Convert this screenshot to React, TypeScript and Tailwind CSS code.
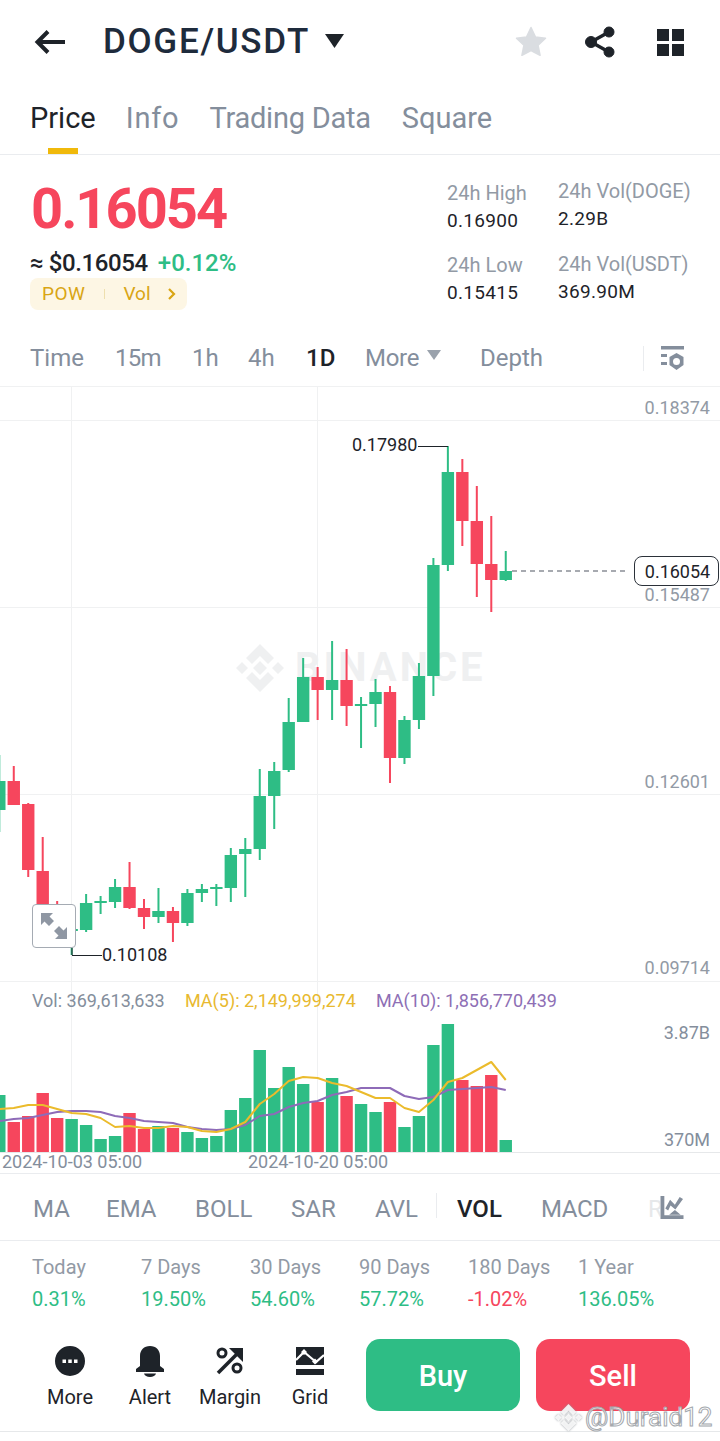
import React from 'react';

// [wick top, body top, body bottom, wick bottom, up?]
const STEP = 14.47;
const candles: [number, number, number, number, number][] = [
  [755, 781, 810, 832, 1],
  [766, 781, 805, 805, 0],
  [803, 804, 870, 877, 0],
  [837, 871, 905, 905, 0],
  [901, 905, 931, 931, 0],
  [905, 929, 931, 955, 1],
  [894, 903, 930, 932, 1],
  [896, 901, 903, 914, 1],
  [879, 887, 902, 908, 1],
  [862, 887, 908, 909, 0],
  [899, 908, 917, 929, 0],
  [888, 911, 917, 923, 1],
  [907, 911, 923, 942, 0],
  [889, 893, 923, 926, 1],
  [884, 889, 893, 902, 1],
  [884, 887, 889, 906, 1],
  [848, 855, 888, 902, 1],
  [838, 849, 854, 897, 1],
  [769, 796, 849, 860, 1],
  [762, 771, 796, 829, 1],
  [698, 722, 770, 772, 1],
  [658, 677, 722, 722, 1],
  [667, 677, 690, 720, 0],
  [641, 680, 690, 720, 1],
  [649, 680, 706, 726, 0],
  [697, 704, 705, 748, 1],
  [679, 692, 704, 727, 1],
  [686, 692, 758, 783, 0],
  [716, 720, 758, 764, 1],
  [663, 676, 720, 729, 1],
  [558, 565, 676, 696, 1],
  [446, 472, 565, 571, 1],
  [459, 472, 521, 546, 0],
  [486, 521, 564, 597, 0],
  [516, 564, 580, 612, 0],
  [551, 571, 580, 581, 1],
];

const volumes: [number, number][] = [
  [1095, 1], [1122, 0], [1116, 0], [1093, 0], [1118, 0], [1119, 1], [1125, 1], [1139, 1], [1136, 1],
  [1113, 0], [1129, 0], [1126, 1], [1128, 0], [1132, 1], [1138, 1], [1136, 1], [1110, 1], [1098, 1],
  [1050, 1], [1088, 1], [1067, 1], [1084, 1], [1102, 0], [1078, 1], [1096, 0], [1104, 1], [1112, 1],
  [1102, 0], [1127, 1], [1116, 1], [1045, 1], [1024, 1], [1080, 0], [1086, 0], [1075, 0], [1140, 1],
];

const ma5 = [1109, 1108, 1105, 1105, 1109, 1113, 1114, 1118, 1127, 1126, 1128, 1128, 1126, 1127, 1131, 1132, 1129, 1122, 1104, 1094, 1081, 1077, 1078, 1083, 1086, 1092, 1098, 1098, 1108, 1112, 1100, 1082, 1078, 1070, 1062, 1080];
const ma10 = [1121, 1119, 1118, 1115, 1112, 1111, 1111, 1112, 1116, 1118, 1121, 1122, 1123, 1127, 1129, 1130, 1129, 1125, 1116, 1114, 1107, 1103, 1101, 1095, 1092, 1088, 1088, 1088, 1096, 1099, 1097, 1090, 1089, 1088, 1087, 1090];

const cx = (i: number) => -0.7 + i * STEP;
const GREEN = '#2ebd85';
const RED = '#f6465d';

function ChartSvg() {
  return (
    <svg className="absolute inset-0" width={720} height={786} viewBox="0 387 720 786">
      <g stroke="#f0f1f2" strokeWidth={1}>
        <path d="M0 420.5H720M0 607.5H720M0 794.5H720M0 981.5H720M71.5 387V1152M317.5 387V1152" fill="none" />
      </g>
      <path d="M0 1152.5H720" stroke="#e6e8ea" strokeWidth={1} />
      {volumes.map(([top, up], i) => (
        <rect key={i} x={cx(i) - 6.2} y={top} width={12.4} height={1152 - top} fill={up ? GREEN : RED} />
      ))}
      <polyline points={ma10.map((y, i) => `${cx(i)},${y}`).join(' ')} fill="none" stroke="#8e6bb8" strokeWidth={2} strokeLinejoin="round" />
      <polyline points={ma5.map((y, i) => `${cx(i)},${y}`).join(' ')} fill="none" stroke="#ebbb2c" strokeWidth={2} strokeLinejoin="round" />
      {candles.map(([wt, bt, bb, wb, up], i) => {
        const c = up ? GREEN : RED;
        return (
          <g key={i} fill={c}>
            <rect x={cx(i) - 1} y={wt} width={2} height={wb - wt} />
            <rect x={cx(i) - 6.2} y={bt} width={12.4} height={Math.max(bb - bt, 2)} />
          </g>
        );
      })}
      <path d="M418 446.5H448M72 955.5H102M72 948V955" fill="none" stroke="#1e2329" strokeWidth={1} />
      <path d="M512 571H628" fill="none" stroke="#8a8f96" strokeWidth={1.500} strokeDasharray="5 4" />
    </svg>
  );
}

function BinanceMark({ className }: { className?: string }) {
  return (
    <svg className={className} viewBox="0 0 48 48" fill="currentColor">
      <path d="M24 0L38 14 32 20 24 12 16 20 10 14zM24 48L10 34 16 28 24 36 32 28 38 34zM0 24L6 18 12 24 6 30zM36 24L42 18 48 24 42 30zM24 17L31 24 24 31 17 24z" />
    </svg>
  );
}

function TopBar() {
  return (
    <div className="flex h-[84px] items-center">
      <svg className="ml-[34px] w-[32px] h-[26px] text-[#1e2329]" viewBox="0 0 32 26" fill="none" stroke="currentColor" strokeWidth={4}>
        <path d="M31 13H4M14 2.500L3.500 13 14 23.500" />
      </svg>
      <div className="ml-[37px] text-[35px] font-medium text-[#1e2b3c] tracking-[1.700px]">DOGE/USDT</div>
      <svg className="ml-[15px] mt-[-3px] w-[19px] h-[14px] text-[#1e2329]" viewBox="0 0 19 14" fill="currentColor">
        <path d="M0 0H19L9.500 14z" />
      </svg>
      <svg className="ml-auto w-[32px] h-[32px] text-[#dadde1]" viewBox="0 0 32 32" fill="currentColor" stroke="currentColor" strokeWidth={1.500} strokeLinejoin="round">
        <path d="M16 1.500l4.500 9.500 10 1.300-7.400 7 2 10L16 24.500 6.900 29.300l2-10-7.400-7 10-1.300z" />
      </svg>
      <svg className="ml-[38px] w-[30px] h-[32px] text-[#1e2329]" viewBox="0 0 30 32" fill="currentColor" stroke="currentColor">
        <circle cx="24" cy="6" r="5" />
        <circle cx="24" cy="26" r="5" />
        <circle cx="6" cy="16" r="5.500" />
        <path d="M6 16L24 6M6 16l18 10" fill="none" strokeWidth={3.500} />
      </svg>
      <svg className="ml-[42px] mr-[36px] w-[27px] h-[27px] text-[#1e2329]" viewBox="0 0 27 27" fill="currentColor">
        <path d="M0 0H12V12H0zM15 0H27V12H15zM0 15H12V27H0zM15 15H27V27H15z" />
      </svg>
    </div>
  );
}

function Tabs() {
  return (
    <div className="relative flex h-[71px] items-center border-b border-[#eaecef] text-[29px] text-[#848e9c]">
      <div className="ml-[30px] text-[#1e2329]">Price</div>
      <div className="ml-[30px] tracking-[0.800px]">Info</div>
      <div className="ml-[30px] tracking-[-0.250px]">Trading Data</div>
      <div className="ml-[31px]">Square</div>
      <div className="absolute left-[48px] bottom-0 w-[30px] h-[6px] bg-[#f0b90b]" />
    </div>
  );
}

function Stat({ label, value, top }: { label: string; value: string; top: string }) {
  return (
    <div className={top}>
      <div className="text-[20px] leading-[24px] text-[#929aa5]">{label}</div>
      <div className="mt-[4px] text-[19px] leading-[24px] tracking-[0.300px] text-[#1e2329]">{value}</div>
    </div>
  );
}

function PriceBlock() {
  return (
    <div className="flex h-[177px]">
      <div className="ml-[30px] w-[417px]">
        <div className="mt-[21px] h-[66px] leading-[66px] text-[56px] font-bold tracking-[-2px] text-[#f6465d] ml-[1px]">0.16054</div>
        <div className="mt-[7px] flex h-[28px] items-center text-[24px] leading-[28px]">
          <span className="font-medium text-[#1e2329] tracking-[-0.400px]">≈ $0.16054</span>
          <span className="ml-[10px] font-medium text-[#2ebd85]">+0.12%</span>
        </div>
        <div className="mt-[1px] flex w-[157px] h-[32px] items-center rounded-[8px] bg-[#fdf6e4] text-[19px] text-[#d9a514]">
          <span className="ml-[12px] tracking-[0.500px]">POW</span>
          <span className="ml-[19px] w-[1px] h-[10px] bg-[#eedfae]" />
          <span className="ml-[18px]">Vol</span>
          <svg className="ml-[16px] w-[9px] h-[12px]" viewBox="0 0 9 12" fill="none" stroke="currentColor" strokeWidth={2.200}>
            <path d="M2 1l5 5-5 5" />
          </svg>
        </div>
      </div>
      <div className="w-[111px]">
        <Stat label="24h High" value="0.16900" top="mt-[26px]" />
        <Stat label="24h Low" value="0.15415" top="mt-[20px]" />
      </div>
      <div>
        <Stat label="24h Vol(DOGE)" value="2.29B" top="mt-[24px]" />
        <Stat label="24h Vol(USDT)" value="369.90M" top="mt-[21px]" />
      </div>
    </div>
  );
}

function TimeRow() {
  return (
    <div className="flex h-[55px] items-center pb-[2px] text-[24px] text-[#848e9c] border-b border-[#f0f1f2]">
      <div className="ml-[30px] w-[85px]">Time</div>
      <div className="w-[77px] tracking-[-0.800px]">15m</div>
      <div className="w-[56px]">1h</div>
      <div className="w-[58px]">4h</div>
      <div className="w-[59px] font-medium text-[#1e2329]">1D</div>
      <div className="w-[62px] tracking-[-0.300px]">More</div>
      <svg className="w-[14px] h-[10px] mt-[-6px] text-[#9aa2ac]" viewBox="0 0 14 10" fill="currentColor">
        <path d="M0 0H14L7 10z" />
      </svg>
      <div className="ml-[39px] w-[163px]">Depth</div>
      <div className="w-[1px] h-[25px] bg-[#eaecef]" />
      <svg className="ml-[16px] w-[25px] h-[25px] text-[#848e9c]" viewBox="0 0 25 25" fill="currentColor">
        <path d="M1 0H24V3.500H1zM1 8H7V11H1zM1 16H7V19H1z" />
        <path fillRule="evenodd" d="M16.500 7l7 4v8l-7 5-7-5v-8zM16.500 12a3.500 3.500 0 100 7 3.500 3.500 0 000-7z" />
      </svg>
    </div>
  );
}

function Chart() {
  return (
    <div className="relative h-[786px] overflow-hidden text-[18px] leading-[22px]">
      <div className="absolute left-[236px] top-[257px] flex items-center text-[#eff0f1]">
        <BinanceMark className="w-[48px] h-[48px]" />
        <span className="ml-[11px] text-[40px] leading-[48px] font-bold tracking-[3px]">BINANCE</span>
      </div>
      <ChartSvg />
      <div className="absolute right-[10px] top-[10px] text-[#929aa5]">0.18374</div>
      <div className="absolute right-[10px] top-[197px] text-[#929aa5]">0.15487</div>
      <div className="absolute right-[10px] top-[384px] text-[#929aa5]">0.12601</div>
      <div className="absolute right-[10px] top-[570px] text-[#929aa5]">0.09714</div>
      <div className="absolute left-[352px] top-[47px] text-[#1e2329]">0.17980</div>
      <div className="absolute left-[102px] top-[557px] text-[#1e2329]">0.10108</div>
      <div className="absolute left-[634px] top-[169px] flex w-[85px] h-[30px] items-center justify-center pt-[1px] pl-[2px] rounded-[8px] border border-[#2b3139] bg-white text-[#1e2329]">0.16054</div>
      <div className="absolute left-[32px] top-[517px] flex w-[44px] h-[44px] items-center justify-center rounded-[4px] border border-[#a5abb3] bg-white">
        <svg className="w-[26px] h-[26px] text-[#8f97a3]" viewBox="0 0 26 26" fill="currentColor">
          <path d="M0 0H12L8.500 3.500 13 8 8 13 3.500 8.500 0 12zM26 26H14L17.500 22.500 13 18 18 13 22.500 17.500 26 14z" />
        </svg>
      </div>
      <div className="absolute left-[32px] top-[603px] text-[#848e9c]">Vol: 369,613,633</div>
      <div className="absolute left-[185px] top-[603px] text-[#e8b92f]">MA(5): 2,149,999,274</div>
      <div className="absolute left-[376px] top-[603px] text-[#8e6fb5]">MA(10): 1,856,770,439</div>
      <div className="absolute right-[10px] top-[635px] text-[#848e9c]">3.87B</div>
      <div className="absolute right-[10px] top-[742px] text-[#848e9c]">370M</div>
      <div className="absolute left-[2px] top-[764px] text-[#848e9c]">2024-10-03 05:00</div>
      <div className="absolute left-[248px] top-[764px] text-[#848e9c]">2024-10-20 05:00</div>
    </div>
  );
}

function IndicatorRow() {
  return (
    <div className="relative flex h-[68px] items-center overflow-hidden border-y border-[#eaecef] pt-[3px] text-[24px] text-[#848e9c]">
      <div className="ml-[33px] w-[73px]">MA</div>
      <div className="w-[89px]">EMA</div>
      <div className="w-[96px]">BOLL</div>
      <div className="w-[84px]">SAR</div>
      <div className="w-[61px]">AVL</div>
      <div className="w-[1px] h-[25px] mt-[-6px] bg-[#eaecef]" />
      <div className="ml-[20px] w-[84px] font-medium text-[#1e2329]">VOL</div>
      <div className="w-[107px] tracking-[-0.300px]">MACD</div>
      <div className="text-[#e6e8ea]">R</div>
      <div className="absolute right-0 top-0 h-full w-[60px] bg-white">
        <svg className="mt-[22px] w-[24px] h-[23px] text-[#848e9c]" viewBox="0 0 24 24" fill="currentColor">
          <path d="M0 0H4V20H24V24H0z" />
          <path d="M5 13L10 4l5 5 5-8 3.500 2L15.500 14 10.500 10 8 15zM9 19.500l6-5 6 5z" />
        </svg>
      </div>
    </div>
  );
}

const returns = [
  ['Today', '0.31%', 'text-[#2ebd85]'],
  ['7 Days', '19.50%', 'text-[#2ebd85]'],
  ['30 Days', '54.60%', 'text-[#2ebd85]'],
  ['90 Days', '57.72%', 'text-[#2ebd85]'],
  ['180 Days', '-1.02%', 'text-[#f6465d]'],
  ['1 Year', '136.05%', 'text-[#2ebd85]'],
];

function Returns() {
  return (
    <div className="grid h-[84px] grid-cols-[109px_109px_109px_109px_110px_1fr] pl-[32px] pt-[13px]">
      {returns.map(([label, value, color]) => (
        <div key={label}>
          <div className="text-[20px] leading-[26px] text-[#929aa5]">{label}</div>
          <div className={`mt-[6px] text-[20px] leading-[26px] ${color}`}>{value}</div>
        </div>
      ))}
    </div>
  );
}

function ActionIcon({ label, children }: { label: string; children: React.ReactNode }) {
  return (
    <div className="flex w-[80px] flex-col items-center">
      <div className="flex h-[32px] w-[40px] items-center justify-center text-[#1e2329]">{children}</div>
      <div className="mt-[7px] text-[20px] leading-[26px] text-[#1e2329]">{label}</div>
    </div>
  );
}

function BottomBar() {
  return (
    <div className="relative flex h-[107px] border-b border-[#e6e8ea] pl-[30px] pt-[14px]">
      <div className="flex pt-[6px] h-[72px]">
        <ActionIcon label="More">
          <svg className="w-[30px] h-[30px]" viewBox="0 0 30 30" fill="currentColor">
            <path fillRule="evenodd" d="M15 0a15 15 0 110 30 15 15 0 010-30zM7.500 13.500v3.500h3.500v-3.500zM13.250 13.500v3.500h3.500v-3.500zM19 13.500v3.500h3.500v-3.500z" />
          </svg>
        </ActionIcon>
        <ActionIcon label="Alert">
          <svg className="w-[28px] h-[31px]" viewBox="0 0 28 31" fill="currentColor">
            <path d="M14 0c6 0 10 4 10 10v10l4 3v3H0v-3l4-3V10C4 4 8 0 14 0zM8 27.500h12c-.5 2-3 3.500-6 3.500s-5.500-1.500-6-3.500z" />
          </svg>
        </ActionIcon>
        <ActionIcon label="Margin">
          <svg className="w-[28px] h-[28px]" viewBox="0 0 28 28" fill="currentColor">
            <path d="M13 1H27V15z" />
            <path d="M2 26L22 6" fill="none" stroke="currentColor" strokeWidth={3.500} />
            <circle cx="6" cy="6" r="4" fill="none" stroke="currentColor" strokeWidth={3} />
            <circle cx="21" cy="21" r="4" fill="none" stroke="currentColor" strokeWidth={3} />
          </svg>
        </ActionIcon>
        <ActionIcon label="Grid">
          <svg className="w-[28px] h-[28px]" viewBox="0 0 28 28" fill="currentColor">
            <path d="M0 0H28V18H0zM0 22H28V28H0z" />
            <path d="M0 13L8 5 14 10 20 15 28 8" fill="none" stroke="white" strokeWidth={2.200} />
            <path fill="white" d="M8 2l3 3-3 3-3-3zM19 11.500l3 3-3 3-3-3z" />
          </svg>
        </ActionIcon>
      </div>
      <button className="ml-[16px] h-[72px] w-[154px] rounded-[14px] bg-[#2ebd85] pt-[3px] text-[29px] font-medium text-white">Buy</button>
      <button className="ml-[16px] h-[72px] w-[154px] rounded-[14px] bg-[#f6465d] pt-[3px] text-[29px] font-medium text-white">Sell</button>
      <div className="absolute left-[555px] top-[78px] flex items-center text-[#ffffffcc]">
        <BinanceMark className="w-[27px] h-[27px] text-[#ffffffdd] [filter:drop-shadow(0_0_1px_#8a8f96)]" />
        <span className="ml-[3px] text-[26px] leading-[28px] [-webkit-text-stroke:1px_#a4a8ad]">@Duraid12</span>
      </div>
    </div>
  );
}

export default function App() {
  return (
    <div className="w-[720px] h-[1441px] overflow-hidden bg-white font-[Roboto,sans-serif]">
      <TopBar />
      <Tabs />
      <PriceBlock />
      <TimeRow />
      <Chart />
      <IndicatorRow />
      <Returns />
      <BottomBar />
    </div>
  );
}
